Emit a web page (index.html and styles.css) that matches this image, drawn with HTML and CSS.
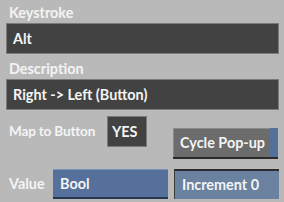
FILE: index.html
```html
<!DOCTYPE html>
<html lang="en">
<head>
  <meta charset="UTF-8">
  <title>Keystroke Editor</title>
  <link rel="stylesheet" href="styles.css">
</head>
<body>
  <div class="panel">
    <div class="label">Keystroke</div>
    <div class="field">Alt</div>

    <div class="label">Description</div>
    <div class="field">Right -&gt; Left (Button)</div>

    <div class="row map-row">
      <span class="row-label">Map to Button</span>
      <div class="field yes">YES</div>
      <button class="cycle"><span>Cycle Pop-up</span></button>
    </div>

    <div class="row value-row">
      <span class="row-label value-label">Value</span>
      <div class="blue-field bool">Bool</div>
      <div class="blue-field increment">Increment 0</div>
    </div>
  </div>
</body>
</html>
```

FILE: styles.css
```css
* {
  margin: 0;
  padding: 0;
  box-sizing: border-box;
}
body {
  background: #b9b9b9;
  color: #f4f4f4;
  font-family: Lato, "DejaVu Sans Condensed", sans-serif;
  font-weight: bold;
  font-size: 14.4px;
}
.panel {
  width: 284px;
  height: 202px;
  padding: 5px 5px 0 6px;
}
.label {
  height: 18px;
  line-height: 15px;
  padding-left: 3px;
}
.field {
  height: 31px;
  line-height: 29px;
  padding-left: 6px;
  background: #424242;
  border: 1px solid #7a7a7a;
  margin-bottom: 7px;
}

/* rows */
.row {
  display: flex;
  align-items: flex-start;
}
.row-label {
  padding-left: 3px;
}
.map-row {
  margin-top: -1px;
  height: 53px;
}
.map-row .row-label {
  width: 101px;
  line-height: 31px;
  font-size: 13.6px;
  letter-spacing: -0.2px;
}
.yes {
  width: 40px;
  padding-left: 4px;
  margin: 0;
}
.cycle {
  margin-left: 26px;
  margin-top: 12px;
  width: 105px;
  height: 31px;
  border: none;
  display: flex;
  font: inherit;
  color: inherit;
  background: #55709a;
  border-bottom: 2px solid #2a2a2a;
}
.cycle span {
  width: 97px;
  height: 100%;
  line-height: 28px;
  text-align: left;
  padding-left: 6px;
  background: #6c6c6c;
  border-top: 1px solid #8a8a8a;
  border-left: 1px solid #8a8a8a;
}

.value-row .value-label {
  width: 47px;
  line-height: 30px;
}
.blue-field {
  height: 30px;
  line-height: 28px;
  padding-left: 7px;
}
.bool {
  width: 115px;
  background: #55709a;
  border-top: 1px solid #7c94b8;
  border-bottom: 2px solid #2a3550;
}
.increment {
  width: 105px;
  margin-left: 6px;
  background: #6a819f;
  border-top: 2px solid #2c2c2c;
  border-left: 1px solid #3a3a3a;
}
```
